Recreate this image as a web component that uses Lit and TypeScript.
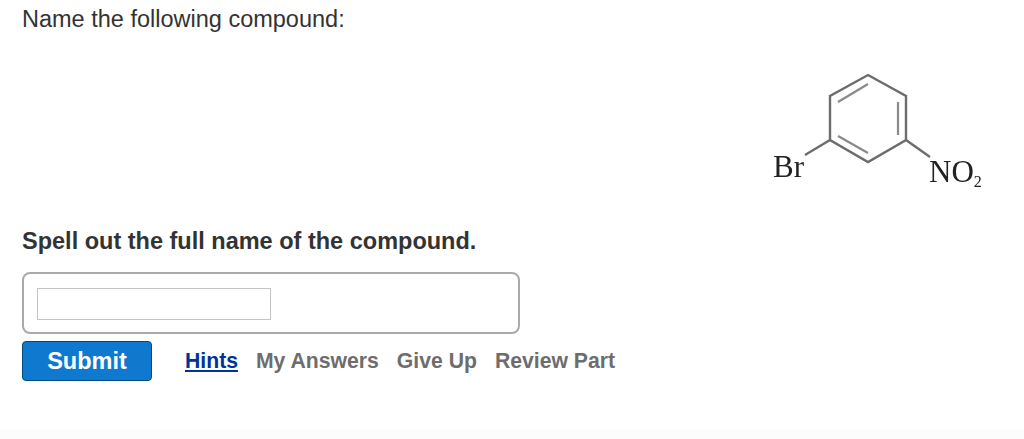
import { LitElement, html, css } from "lit";
import { customElement } from "lit/decorators.js";

@customElement("app-root")
export class AppRoot extends LitElement {
  static styles = css`
    :host {
      display: block;
      width: 1024px;
      height: 439px;
      overflow: hidden;
      background: linear-gradient(#fff 430px, #fcfcfc 430px);
      font-family: "Liberation Sans", Arial, sans-serif;
      color: #333;
      box-sizing: border-box;
      padding: 5px 22px 0;
    }
    .question { font-size: 23.5px; line-height: 28px; }
    .figure { display: flex; justify-content: flex-end; margin: 33px -22px 0 0; height: 135px; }
    .figure svg { display: block; width: 264px; height: 135px; filter: blur(0.4px); }
    .bond { stroke: #6c6c6c; stroke-width: 2.4; fill: none; stroke-linejoin: miter; }
    .inner { stroke: #8a8a8a; stroke-width: 2.2; fill: none; }
    .atom { font-family: "Liberation Serif", "Times New Roman", serif; font-size: 31px; fill: #222; }
    .sub { font-size: 16px; }
    .prompt { font-size: 23.5px; font-weight: 700; line-height: 28px; margin-top: 26px; }
    .answer {
      margin-top: 17px;
      box-sizing: border-box;
      width: 498px;
      height: 62px;
      border: 2px solid #aaa;
      border-radius: 8px;
      padding: 14px 13px 0;
      background: #fff;
    }
    .answer input {
      display: block;
      box-sizing: border-box;
      width: 234px;
      height: 32px;
      border: 1px solid #c4c4c4;
      background: #fff;
      margin: 0;
      padding: 0 4px;
    }
    .actions { display: flex; align-items: center; margin-top: 7px; font-size: 21.2px; font-weight: 700; }
    .submit {
      box-sizing: border-box;
      width: 130px;
      height: 40px;
      background: #0f79d0;
      border: 1.5px solid #004a7f;
      border-radius: 4px;
      color: #fff;
      font: inherit;
      font-size: 23.5px;
      padding: 0;
      margin-right: 33px;
    }
    .links { display: flex; gap: 18px; }
    .links a { color: #6d6d6d; text-decoration: none; }
    .links a.hints { color: #003399; text-decoration: underline; }
  `;

  render() {
    return html`
      <div class="question">Name the following compound:</div>
      <div class="figure">
        <svg viewBox="760 66 264 135" role="img" aria-label="1-bromo-3-nitrobenzene structure">
          <path class="bond" d="M868 75 L906 96 L906 140 L868 162 L830 140 L830 96 Z" />
          <path class="bond" d="M830 140 L805 155 M906 140 L930 157" />
          <path class="inner" d="M838 102 L868 84 M898 102 L898 135 M838 136 L868 153" />
          <text class="atom" x="773" y="177">Br</text>
          <text class="atom" x="929" y="182">NO<tspan class="sub" dy="5">2</tspan></text>
        </svg>
      </div>
      <div class="prompt">Spell out the full name of the compound.</div>
      <div class="answer"><input type="text" aria-label="Answer" /></div>
      <div class="actions">
        <button class="submit">Submit</button>
        <div class="links">
          <a class="hints" href="#">Hints</a>
          <a href="#">My Answers</a>
          <a href="#">Give Up</a>
          <a href="#">Review Part</a>
        </div>
      </div>
    `;
  }
}
